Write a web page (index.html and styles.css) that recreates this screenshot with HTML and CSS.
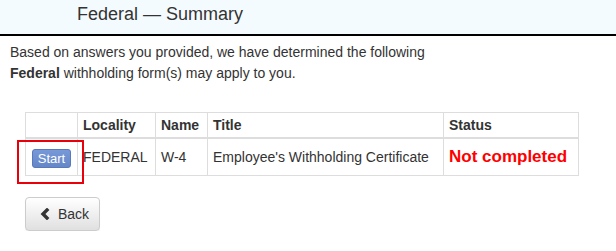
FILE: index.html
```html
<!DOCTYPE html>
<html lang="en">
<head>
<meta charset="utf-8">
<title>Federal — Summary</title>
<link rel="stylesheet" href="styles.css">
</head>
<body>
<header class="page-header">
  <h1 class="page-title">Federal — Summary</h1>
</header>
<main class="content">
  <p class="intro">Based on answers you provided, we have determined the following<br><strong>Federal</strong> withholding form(s) may apply to you.</p>
  <div class="table-wrap">
    <table class="forms">
      <colgroup>
        <col class="c-action"><col class="c-loc"><col class="c-name"><col class="c-title"><col class="c-status">
      </colgroup>
      <thead>
        <tr><th></th><th>Locality</th><th>Name</th><th>Title</th><th>Status</th></tr>
      </thead>
      <tbody>
        <tr>
          <td class="action"><button class="btn-start" type="button">Start</button></td>
          <td>FEDERAL</td>
          <td>W-4</td>
          <td>Employee's Withholding Certificate</td>
          <td class="status">Not completed</td>
        </tr>
      </tbody>
    </table>
    <div class="highlight"></div>
  </div>
  <button class="btn-back" type="button"><svg class="chev" width="10" height="12" viewBox="0 0 10 12"><polyline points="8.2,0.8 3,6 8.2,11.2" fill="none" stroke="#333" stroke-width="3.4"/></svg><span>Back</span></button>
</main>
</body>
</html>
```
FILE: styles.css
```css
html, body {
  margin: 0;
  padding: 0;
  background: #fff;
}
body {
  font-family: "Liberation Sans", Arial, sans-serif;
  color: #333;
  font-size: 14px;
}
.page-header {
  background: #f4fbfe;
  border-bottom: 2px solid #000;
  box-sizing: border-box;
  height: 36px;
  padding: 4px 0 0 77px;
}
.page-title {
  margin: 0;
  font-size: 18px;
  line-height: 20px;
  font-weight: normal;
  color: #333;
}
.content {
  padding: 0 10px;
}
.intro {
  margin: 6px 0 0;
  font-size: 14px;
  line-height: 21px;
  color: #333;
}
.intro strong {
  font-weight: bold;
}
.table-wrap {
  position: relative;
  margin: 28px 0 0 15px;
  width: 553px;
}
.forms {
  border-collapse: collapse;
  table-layout: fixed;
  width: 553px;
  font-size: 14px;
  line-height: 20px;
}
.c-action { width: 52px; }
.c-loc { width: 78px; }
.c-name { width: 52px; }
.c-title { width: 236px; }
.c-status { width: 135px; }
.forms th, .forms td {
  border: 1px solid #ddd;
  text-align: left;
  white-space: nowrap;
}
.forms th {
  padding: 2px 5px;
  height: 20px;
  font-weight: bold;
  border-bottom: 2px solid #ddd;
  vertical-align: bottom;
}
.forms td {
  padding: 5px 5px;
  height: 26px;
  vertical-align: middle;
}
.forms td.action {
  padding: 6px 0 4px 6px;
}
.btn-start {
  display: block;
  box-sizing: border-box;
  font-family: "Liberation Sans", Arial, sans-serif;
  font-size: 13px;
  line-height: 17px;
  height: 19px;
  width: 39px;
  padding: 0;
  color: #fff;
  background: linear-gradient(#7799d8, #6587c8);
  border: 1px solid #5879bb;
  border-radius: 3px;
  text-align: center;
}
.status {
  color: #f00;
  font-weight: bold;
  font-size: 17px;
}
.highlight {
  position: absolute;
  left: -8px;
  top: 28px;
  width: 67px;
  height: 44px;
  box-sizing: border-box;
  border: 2px solid #e8000b;
}
.btn-back {
  display: flex;
  align-items: center;
  gap: 8px;
  margin: 21px 0 0 15px;
  height: 34px;
  width: 75px;
  box-sizing: border-box;
  padding: 0 12px 0 14px;
  font-family: "Liberation Sans", Arial, sans-serif;
  font-size: 14px;
  line-height: 20px;
  color: #333;
  background: linear-gradient(#fff, #e0e0e0);
  border: 1px solid #ccc;
  border-radius: 4px;
  box-shadow: inset 0 1px 0 rgba(255,255,255,.15), 0 1px 1px rgba(0,0,0,.075);
}
.chev {
  display: block;
  flex: none;
}
```
